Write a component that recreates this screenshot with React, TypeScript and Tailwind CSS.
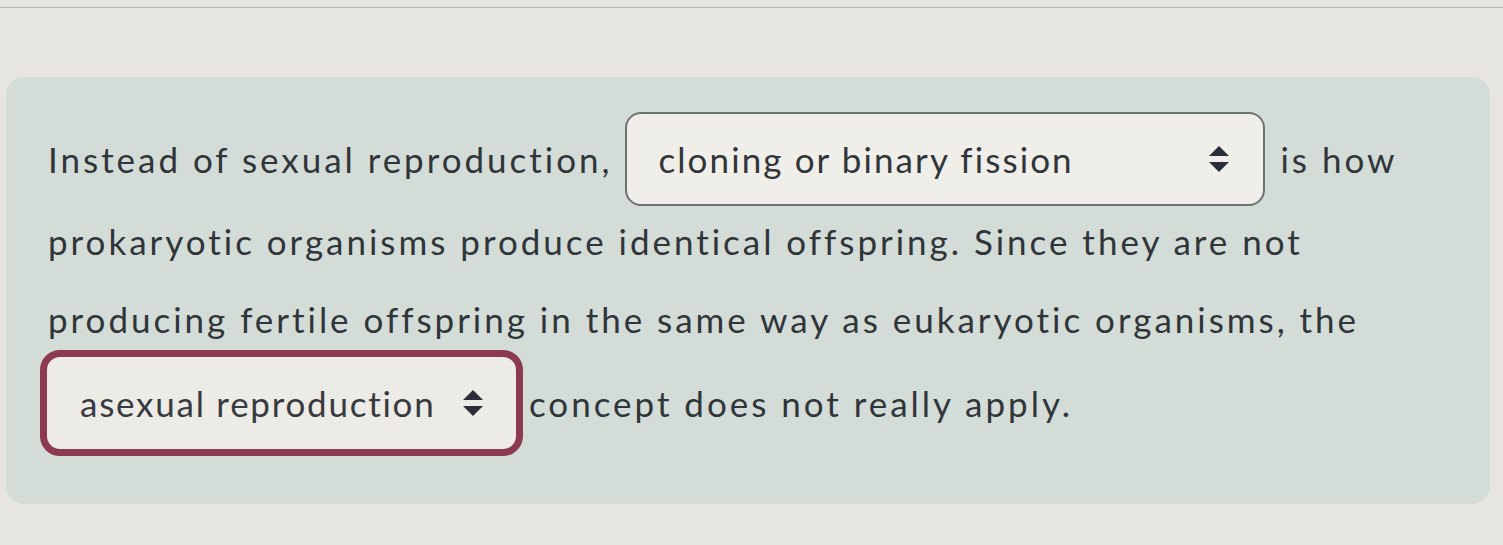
import React from "react";

const FONT = { fontFamily: "Lato, 'Open Sans', sans-serif" };

function Arrows() {
  return (
    <svg width="20" height="26" viewBox="0 0 20 26" className="shrink-0">
      <path d="M10 0 L20 10 L0 10 Z" fill="#2b2d3a" />
      <path d="M0 16 L20 16 L10 26 Z" fill="#2b2d3a" />
    </svg>
  );
}

export default function App() {
  return (
    <div className="min-h-[545px] w-[1503px] bg-[#e7e5e0] text-[#30353a]" style={FONT}>
      <div className="h-[8px] border-b border-[#b8b8bc]" />
      <div className="px-[6px] pt-[69px] pb-[42px] pr-[13px]">
        <div className="rounded-[18px] bg-[#d4dcd8] pl-[42px] pt-[35px] pb-[48px] text-[35px] leading-none tracking-[0.085em]">
          {/* line 1 */}
          <div className="flex items-center">
            <span>Instead of sexual reproduction,</span>
            <div className="ml-[13px] flex h-[94px] w-[640px] items-center justify-between rounded-[16px] border-2 border-[#6f7275] bg-[#efeee9] pl-[31px] pr-[34px] tracking-[0.06em]">
              <span>cloning or binary fission</span>
              <Arrows />
            </div>
            <span className="ml-[15px]">is how</span>
          </div>
          {/* line 2 */}
          <div className="flex h-[70px] items-center">
            prokaryotic organisms produce identical offspring. Since they are not
          </div>
          {/* line 3 */}
          <div className="flex h-[74px] items-center pt-[12px]">
            producing fertile offspring in the same way as eukaryotic organisms, the
          </div>
          {/* line 4 */}
          <div className="-ml-[8px] flex items-center">
            <div className="flex h-[106px] w-[483px] items-center justify-between rounded-[20px] border-[7px] border-[#8c3a50] bg-[#ecebe6] pl-[33px] pr-[33px] tracking-[0.05em] text-[#373a40]">
              <span>asexual reproduction</span>
              <Arrows />
            </div>
            <span className="ml-[6px]">concept does not really apply.</span>
          </div>
        </div>
      </div>
    </div>
  );
}
